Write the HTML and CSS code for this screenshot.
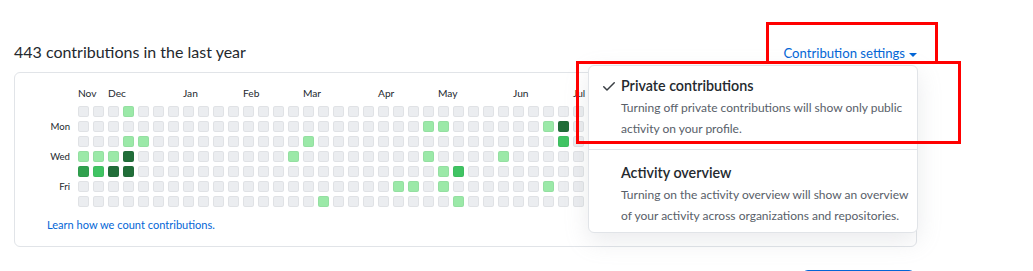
FILE: index.html
```html
<!DOCTYPE html>
<html lang="en">
<head>
<meta charset="utf-8">
<title>Contributions</title>
<link rel="stylesheet" href="styles.css">
</head>
<body>
<div class="page">
  <div class="header">
    <h2 class="title">443 contributions in the last year</h2>
    <a class="settings-link" href="#">Contribution settings<span class="caret"></span></a>
  </div>

  <div class="graph-box">
    <div class="graph">
      <div class="days">
        <span class="day"></span>
        <span class="day">Mon</span>
        <span class="day"></span>
        <span class="day">Wed</span>
        <span class="day"></span>
        <span class="day">Fri</span>
        <span class="day"></span>
      </div>
      <div class="calendar">
        <div class="months" id="months"></div>
        <div class="weeks" id="weeks"></div>
      </div>
    </div>
    <a class="learn" href="#">Learn how we count contributions.</a>
  </div>

  <div class="actions"><span class="year-btn"></span></div>

  <div class="menu">
    <div class="menu-item">
      <span class="menu-icon">
        <svg width="16" height="16" viewBox="0 0 16 16"><path fill="#3a3f44" d="M13.78 4.22a.75.75 0 010 1.06l-7.25 7.25a.75.75 0 01-1.06 0L2.22 9.28a.75.75 0 011.06-1.06L6 10.94l6.72-6.72a.75.75 0 011.06 0z"/></svg>
      </span>
      <div class="menu-text">
        <div class="menu-title">Private contributions</div>
        <div class="menu-desc">Turning off private contributions will show only public activity on your profile.</div>
      </div>
    </div>
    <div class="menu-divider"></div>
    <div class="menu-item menu-item-last">
      <span class="menu-icon"></span>
      <div class="menu-text">
        <div class="menu-title">Activity overview</div>
        <div class="menu-desc">Turning on the activity overview will show an overview of your activity across organizations and repositories.</div>
      </div>
    </div>
  </div>

  <div class="annot annot-link"></div>
  <div class="annot annot-item"></div>
</div>
<script src="script.js"></script>
</body>
</html>
```

FILE: styles.css
```css
html, body {
  margin: 0;
  padding: 0;
  overflow: hidden;
  background: #ffffff;
}
body {
  font-family: Lato, "Open Sans", sans-serif;
  color: #24292e;
}
.page {
  position: relative;
  width: 903px;
  padding: 40px 0 0 14px;
}
.header {
  display: flex;
  justify-content: space-between;
  align-items: baseline;
  margin-bottom: 8px;
}
.title {
  margin: 0;
  font-size: 16px;
  font-weight: 400;
  line-height: 24px;
}
.settings-link {
  font-size: 13.15px;
  line-height: 20px;
  color: #0366d6;
  text-decoration: none;
}
.caret {
  display: inline-block;
  width: 0;
  height: 0;
  margin-left: 4px;
  vertical-align: middle;
  border-top: 4px solid #0366d6;
  border-left: 4px solid transparent;
  border-right: 4px solid transparent;
}
.graph-box {
  border: 1px solid #e1e4e8;
  border-radius: 6px;
  padding: 13px 0 12px 0;
  height: 148px;
}
.graph {
  display: flex;
  gap: 8px;
}
.days {
  width: 55px;
  display: grid;
  grid-template-rows: repeat(7, 11px);
  row-gap: 4px;
  padding-top: 20px;
}
.day {
  font-size: 9.6px;
  line-height: 11px;
  text-align: right;
}
.calendar {
  display: flex;
  flex-direction: column;
}
.months {
  display: grid;
  grid-template-columns: repeat(53, 11px);
  grid-template-rows: 14px;
  column-gap: 4px;
  height: 14px;
  margin-bottom: 6px;
}
.month {
  grid-row: 1;
  font-size: 10.2px;
  line-height: 14px;
  white-space: nowrap;
}
.weeks {
  display: grid;
  grid-template-rows: repeat(7, 11px);
  grid-auto-flow: column;
  grid-auto-columns: 11px;
  gap: 4px;
}
.cell {
  width: 11px;
  height: 11px;
  border-radius: 2px;
  box-sizing: border-box;
  background: #ebedf0;
  outline: 1px solid rgba(27, 31, 35, 0.05);
  outline-offset: -1px;
}
.l1 { background: #9be9a8; }
.l2 { background: #40c463; }
.l3 { background: #30a14e; }
.l4 { background: #216e39; }
.learn {
  display: inline-block;
  margin: 10px 0 0 32px;
  font-size: 11.05px;
  line-height: 16px;
  color: #0366d6;
  text-decoration: none;
}
.actions {
  display: flex;
  justify-content: flex-end;
  margin-top: 23px;
  padding-right: 2px;
}
.year-btn {
  display: block;
  width: 113px;
  height: 32px;
  border-radius: 6px;
  background: #0366d6;
}
.menu {
  position: absolute;
  left: 588px;
  top: 65px;
  width: 330px;
  box-sizing: border-box;
  background: #ffffff;
  border: 1px solid #e1e4e8;
  border-radius: 6px;
  box-shadow: 0 8px 24px rgba(149, 157, 165, 0.2);
}
.menu-item {
  display: flex;
  padding: 12px 6px 10px 12px;
}
.menu-item:first-child {
  padding-top: 9px;
}
.menu-item-last {
  padding-bottom: 6px;
}
.menu-icon {
  flex: 0 0 20px;
  padding-top: 3px;
}
.menu-icon svg {
  display: block;
}
.menu-title {
  font-size: 14.3px;
  font-weight: 600;
  line-height: 21px;
  color: #24292e;
}
.menu-desc {
  margin-top: 1px;
  font-size: 12px;
  line-height: 21px;
  color: #586069;
}
.menu-divider {
  height: 1px;
  background: #e1e4e8;
}
.annot {
  position: absolute;
  box-sizing: border-box;
  border: 3px solid #ff0000;
}
.annot-link {
  left: 766px;
  top: 22px;
  width: 172px;
  height: 42px;
}
.annot-item {
  left: 576px;
  top: 61px;
  width: 385px;
  height: 83px;
}
```

FILE: script.js
```js
(function () {
  var data = [
    "0001300", "0001200", "0001400", "1014400", "0010000",
    "0000000", "0000000", "0000000", "0000000", "0000000",
    "0000000", "0000000", "0000000", "0000000", "0001000",
    "0010000", "0000001", "0000000", "0000000", "0000000",
    "0000000", "0000010", "0000010", "0101000", "0100110",
    "0000201", "0000000", "0000000", "0001000", "0000000",
    "0000000", "0100010", "0420000", "0000000"
  ];
  var weeks = document.getElementById("weeks");
  for (var c = 0; c < 53; c++) {
    var col = data[c] || "0000000";
    for (var r = 0; r < 7; r++) {
      var cell = document.createElement("span");
      var lvl = col.charAt(r);
      cell.className = "cell" + (lvl !== "0" ? " l" + lvl : "");
      weeks.appendChild(cell);
    }
  }
  var months = [
    ["Nov", 0], ["Dec", 2], ["Jan", 7], ["Feb", 11], ["Mar", 15], ["Apr", 20],
    ["May", 24], ["Jun", 29], ["Jul", 33]
  ];
  var mEl = document.getElementById("months");
  months.forEach(function (m) {
    var s = document.createElement("span");
    s.className = "month";
    s.textContent = m[0];
    s.style.gridColumn = (m[1] + 1) + " / span 1";
    mEl.appendChild(s);
  });
})();
```
